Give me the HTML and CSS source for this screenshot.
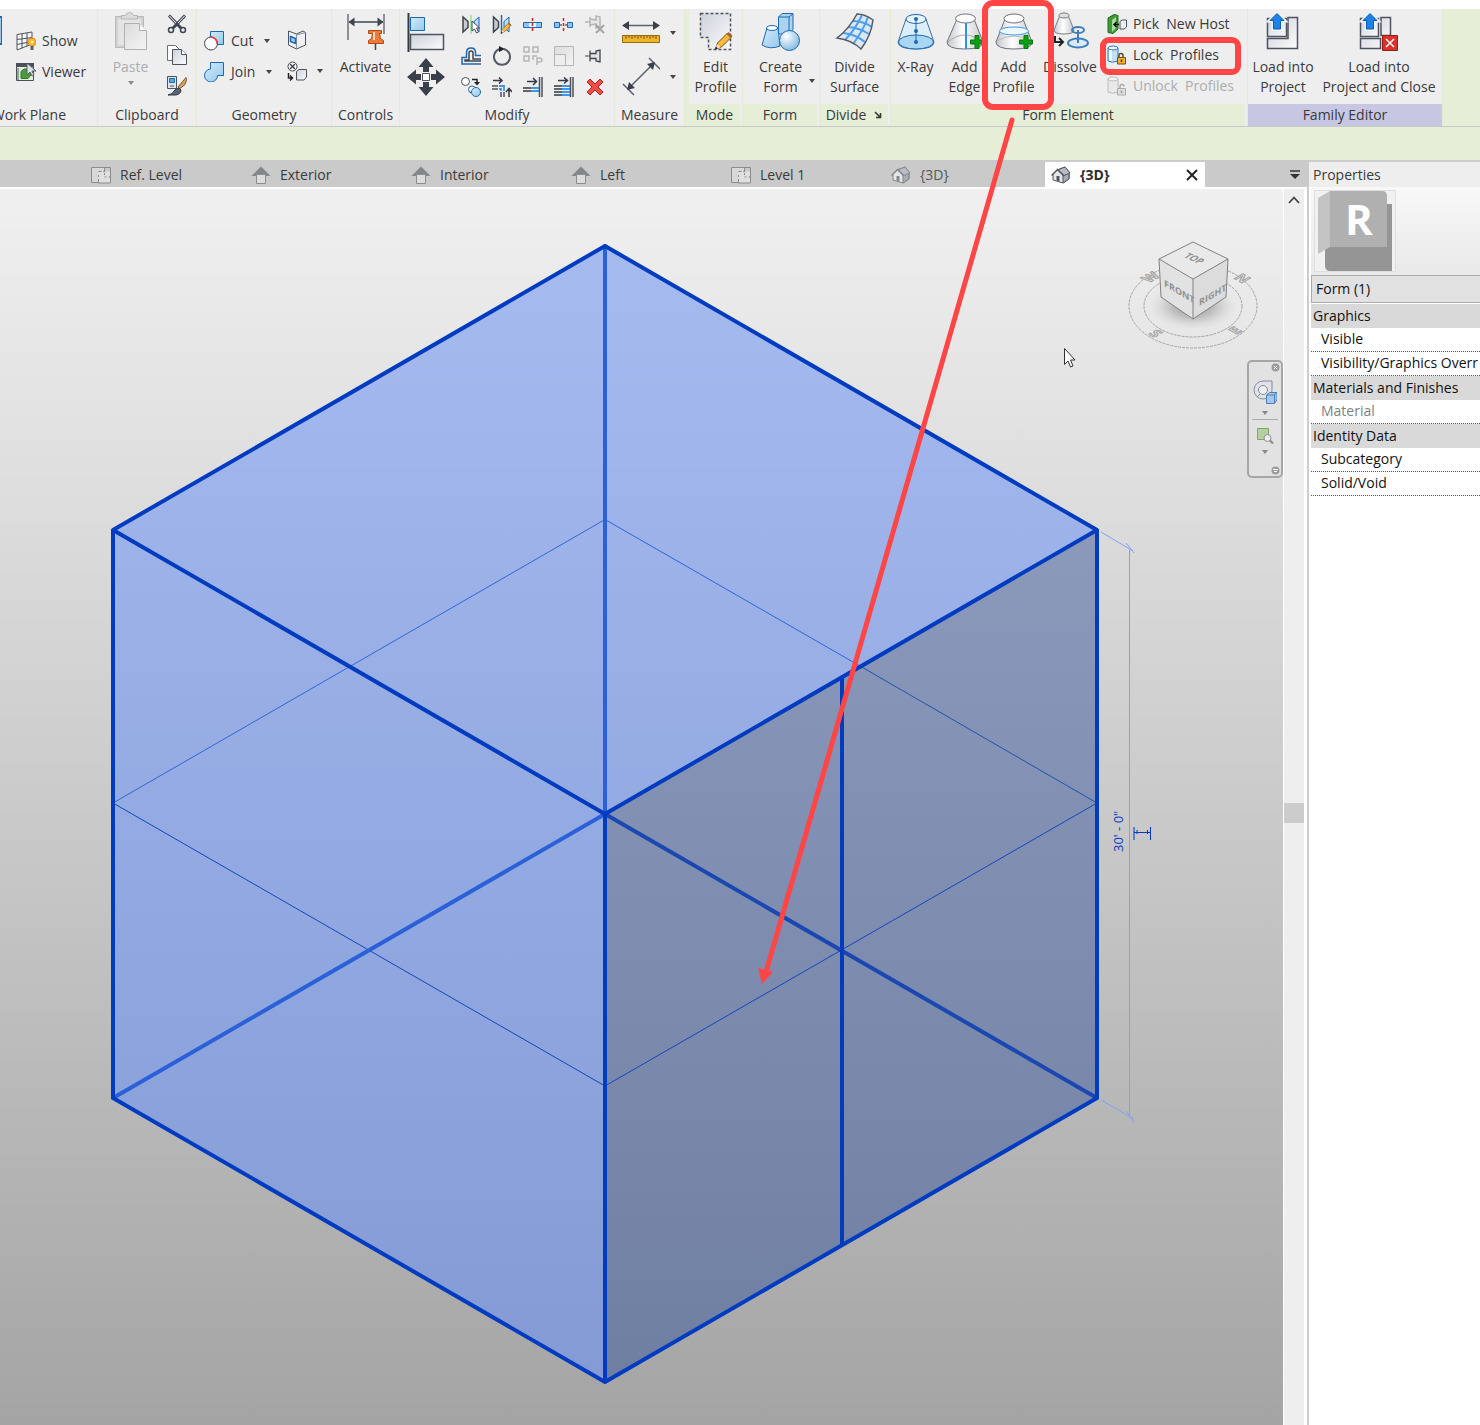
FILE: index.html
```html
<!DOCTYPE html>
<html lang="en">
<head>
<meta charset="utf-8">
<title>Form (1) - {3D}</title>
<link rel="stylesheet" href="styles.css">
</head>
<body>
<svg class="defs" width="0" height="0" aria-hidden="true">
  <defs>
    <linearGradient id="silver" x1="0" y1="0" x2="1" y2="1"><stop offset="0" stop-color="#cdd1da"/><stop offset="1" stop-color="#fbfbfc"/></linearGradient>
    <linearGradient id="grey" x1="0" y1="0" x2="1" y2="1"><stop offset="0" stop-color="#dcdcdc"/><stop offset="1" stop-color="#f4f4f4"/></linearGradient>
    <linearGradient id="sky" x1="0" y1="0" x2="1" y2="1"><stop offset="0" stop-color="#d3ebfa"/><stop offset="1" stop-color="#94c8ec"/></linearGradient>
    <linearGradient id="cone" x1="0" x2="1"><stop offset="0" stop-color="#c4c7cc"/><stop offset=".45" stop-color="#ffffff"/><stop offset="1" stop-color="#c4c7cc"/></linearGradient>
    <radialGradient id="ball" cx=".35" cy=".3" r=".75"><stop offset="0" stop-color="#fff"/><stop offset="1" stop-color="#7fb9e0"/></radialGradient>
    <linearGradient id="lightface" gradientUnits="userSpaceOnUse" x1="0" y1="246" x2="0" y2="1382"><stop offset="0" stop-color="#a5bbf0"/><stop offset="1" stop-color="#839ad4"/></linearGradient>
    <linearGradient id="darkface" gradientUnits="userSpaceOnUse" x1="0" y1="530" x2="0" y2="1382"><stop offset="0" stop-color="#8b99bb"/><stop offset="1" stop-color="#6f7fa2"/></linearGradient>
    <radialGradient id="shade"><stop offset="0" stop-color="#777" stop-opacity=".9"/><stop offset=".5" stop-color="#999" stop-opacity=".5"/><stop offset="1" stop-color="#ccc" stop-opacity="0"/></radialGradient>
    <symbol id="i-pencil" viewBox="0 0 20 20"><path d="M2 18 4 12 14 2l4 4L8 16Z" fill="#fdb93a" stroke="#6b4a1e"/><path d="m13 3 2-2 4 4-2 2Z" fill="#a5632b"/><path d="m2 18 1.500-5L7 16.500Z" fill="#fbe3c0"/><path d="m1.500 18.500 1-3 2 2Z" fill="#222"/></symbol>
    <symbol id="i-plus" viewBox="0 0 14 14"><path d="M5 .5h4V5h4.500v4H9v4.500H5V9H.5V5H5Z" fill="#0aa012" stroke="#087a0e"/></symbol>
    <symbol id="i-plan" viewBox="0 0 20 18"><path d="M.5 1.500h13v15H.5Z" fill="#d8d8d8" stroke="#888b8f"/><path d="M7.500 5.500H19.500v11.500H7.500Z" fill="#e0e0e0"/><path d="M13.500 5.500V1.500h6v15.500h-12V13m0-2V9m0-3.500h3m1.500 0h2M13.500 7v2m0 2h2m2 0h2" fill="none" stroke="#888b8f"/></symbol>
    <symbol id="i-elev" viewBox="0 0 20 18"><path d="M10 .5 19.500 10H.5Z" fill="#84868a"/><path d="M5.500 8.500h9v9h-9Z" fill="#dcdcdc" stroke="#8b8d91"/></symbol>
    <symbol id="i-house" viewBox="0 0 20 18"><path d="m2 8 4-4 8-3 4 5v7l-6 4-10-3Z" fill="#e3e5e8" stroke="currentColor"/><path d="M12 8 18 6.500v6.500l-6 4Z" fill="#a7acb3" stroke="currentColor"/><path d="M6.500 4 14 1l5 6-6 2.500Z" fill="#b9bdc3" stroke="currentColor"/><path d="M.5 9.500 6.500 3.500 13 10" fill="none" stroke="currentColor" stroke-width="1.500"/><path d="M5.500 10h3v5.500l-3-1Z" fill="currentColor"/></symbol>
  </defs>
</svg>

<div class="app">
  <header class="ribbon">
    <section class="panel work-plane">
      <div class="panel-body">
        <svg class="sliver" width="2" height="29" aria-hidden="true"><path d="M0 0h2v29H0Z" fill="#1d68b3"/><path d="M0 2h1v25H0Z" fill="#9cc8ec"/></svg>
        <div class="rows two">
          <button class="cmd"><svg width="20" height="20" viewBox="0 0 20 20"><path d="M1 3.500 16 1v12L1 19Z" fill="#f3f5f7" stroke="#4d535e"/><path d="M6 3v14.500M11 2v13.500M1 8.500l15-2M1 13.500l15-3" stroke="#4d535e"/><circle cx="16" cy="11" r="4" fill="#ffb52e" stroke="#f08a10"/><circle cx="16" cy="11" r="1.500" fill="#fff3b0"/><path d="M14.500 15h3v4h-3Z" fill="#555c68"/></svg>Show</button>
          <button class="cmd"><svg width="20" height="20" viewBox="0 0 20 20"><path d="M.5 1.500h17v17H.5Z" fill="#e6ebe6" stroke="#4a4f58"/><path d="M0 1h18v4H0Z" fill="#4a4f58"/><path d="M1 6h2v12H1Z" fill="#8a9"/><path d="M5 9.500 8 7h7v6l-3 3.500H5Z" fill="#4b9a3e" stroke="#2c7a25"/><path d="M11 1v12l3-3 2 4 2-1-2-4h4Z" fill="#dfe1e4" stroke="#555b66"/></svg>Viewer</button>
        </div>
      </div>
      <h2 class="panel-title">Work Plane</h2>
    </section>

    <section class="panel clipboard">
      <div class="panel-body">
        <button class="big" disabled><svg width="34" height="40" viewBox="0 0 34 40"><path d="M1.500 4.500h28v31h-28Z" fill="#d2d2d2" stroke="#b9b9b9"/><path d="M4 7h23v26H4Z" fill="#e4e4e4"/><path d="M7.500 7V3.500h4q1-3 4-3t4 3h4V7Z" fill="#dcdcdc" stroke="#b4b4b4"/><path d="M10.500 11.500h15l7 7v19h-22Z" fill="url(#grey)" stroke="#b0b0b0"/><path d="M25.500 11.500v7h7" fill="#fff" stroke="#b0b0b0"/></svg><span>Paste</span><i class="caret"></i></button>
        <div class="rows">
          <button class="cmd" aria-label="Cut to clipboard"><svg width="20" height="20" viewBox="0 0 20 20"><path d="M2 1.500 11 11l4 4M18 1.500 9 11l-4 4" fill="none" stroke="#3f4550" stroke-width="3"/><path d="M2.500 2 9 9M17.500 2 11 9" stroke="#fff"/><circle cx="4" cy="16" r="2.500" fill="#eee" stroke="#3f4550" stroke-width="1.500"/><circle cx="16" cy="16" r="2.500" fill="#eee" stroke="#3f4550" stroke-width="1.500"/></svg></button>
          <button class="cmd" aria-label="Copy to clipboard"><svg width="20" height="20" viewBox="0 0 20 20"><path d="M.5.5h8l4 4v11H.5Z" fill="#fff" stroke="#6a6f78"/><path d="M5.500 4.500h9l5 5v10h-14Z" fill="url(#silver)" stroke="#4d535e"/><path d="M14.500 4.500v5h5" fill="#fff" stroke="#4d535e"/></svg></button>
          <button class="cmd" aria-label="Match type"><svg width="20" height="20" viewBox="0 0 20 20"><path d="M.5.5h9v12h-9Z" fill="#dfe4ea" stroke="#4d535e"/><path d="M2.500 2.500h5v4h-5Z" fill="#5ba7e6" stroke="#1d68b3"/><path d="M3 10h4" stroke="#4d535e"/><path d="m11 11 8-9.500 1 1-2 6-5 4Z" fill="#d8a058" stroke="#7a5a30"/><path d="M1 19q5-1 6-4 2-3 5-3l2 2q0 4-5 5Z" fill="#5b6370" stroke="#333944"/></svg></button>
        </div>
      </div>
      <h2 class="panel-title">Clipboard</h2>
    </section>

    <section class="panel geometry">
      <div class="panel-body">
        <div class="rows two">
          <button class="cmd"><svg width="20" height="20" viewBox="0 0 20 20"><path d="M6.500.5h13v13h-13Z" fill="url(#sky)" stroke="#1d68b3"/><circle cx="7" cy="12.500" r="6.500" fill="#fff" stroke="#3f4550"/><path d="M6.500 6A6.500 6.500 0 0 1 13 13" fill="none" stroke="#f33" stroke-width="1.500"/></svg>Cut<i class="caret"></i></button>
          <button class="cmd"><svg width="20" height="20" viewBox="0 0 20 20"><path d="M6.500.5h13v13h-6A6.500 6.500 0 1 1 6.500 7Z" fill="url(#sky)" stroke="#1d68b3"/></svg>Join<i class="caret"></i></button>
        </div>
        <div class="rows two extra">
          <button class="cmd" aria-label="Split face"><svg width="20" height="20" viewBox="0 0 20 20"><path d="m1.500 1 8 3L16 1l2.500 1.500V15l-9 4-8-4Z" fill="#eef0f3" stroke="#4d535e"/><path d="m9.500 5 9-2.500M9.500 4v15" stroke="#8b919b"/><path d="m3.500 6.500 5 2v5l-5-2Z" fill="#9cd0f5" stroke="#1d68b3" stroke-width="1.500"/></svg></button>
          <button class="cmd" aria-label="Paint"><svg width="20" height="20" viewBox="0 0 20 20"><circle cx="5.500" cy="5.500" r="4.500" fill="#fff" stroke="#3f4550"/><path d="m3 3 5 5m0-5L3 8" stroke="#3f4550" stroke-width="1.500"/><path d="M9.500 10.500 12 8.500h7.500v7.500L17 19H9.500Z" fill="url(#silver)" stroke="#4d535e"/><path d="M1.500 12v5H5m-2-2.500L5.500 17 3 19.500" fill="none" stroke="#222" stroke-width="1.500"/></svg><i class="caret"></i></button>
        </div>
      </div>
      <h2 class="panel-title">Geometry</h2>
    </section>

    <section class="panel controls">
      <div class="panel-body">
        <button class="big"><svg width="38" height="40" viewBox="0 0 38 40"><path d="M1 2v26M37 2v20" stroke="#6c727c" stroke-width="1.500"/><path d="M2 10h34" stroke="#3f4550" stroke-width="1.500"/><path d="m1.500 10 6-4.500v9ZM36.500 10l-6-4.500v9Z" fill="#3f4550"/><path d="M21.500 18.500h13v3h-2l1 5 3 2v3h-15v-3l3-2 1-5h-4Z" fill="#ec7a3a" stroke="#b34a10"/><path d="M26 20h2v8h-2Z" fill="#ffd9bd"/><path d="M28.500 32v6" stroke="#444" stroke-width="1.500"/></svg><span>Activate</span></button>
      </div>
      <h2 class="panel-title">Controls</h2>
    </section>

    <section class="panel modify">
      <div class="panel-body">
        <div class="tall">
          <button aria-label="Align"><svg width="38" height="40" viewBox="0 0 38 40"><path d="M1.500 0v39" stroke="#333944" stroke-width="2"/><path d="M3.500 4.500h14v13h-14Z" fill="url(#sky)" stroke="#1d68b3"/><path d="M3.500 21.500h33v15h-33Z" fill="url(#silver)" stroke="#4d535e" stroke-width="1.500"/></svg></button>
          <button aria-label="Move"><svg width="38" height="40" viewBox="0 0 38 40"><path d="m19 1 7.500 9H22v5h-6v-5h-4.500ZM19 39l-7.500-9H16v-5h6v5h4.500ZM0 20l9-7.500V17h5v6H9v4.500ZM38 20l-9-7.500V17h-5v6h5v4.500Z" fill="#3a404a"/><path d="M15.500 16.500h7v7h-7Z" fill="#fff" stroke="#4d535e"/></svg></button>
        </div>
        <div class="tools">
          <button aria-label="Mirror - pick axis"><svg width="20" height="20" viewBox="0 0 20 20"><path d="M18 2v15l-5-4.500v-6Z" fill="#bcdcf4" stroke="#1d68b3"/><path d="M2 2v15l5-4.500v-6Z" fill="#c8cbd0" stroke="#3f4550" stroke-width="1.500"/><path d="M10 0v19" stroke="#6d6"/><path d="M11 6v10l2.500-2 2 4 2-1-2-4h3Z" fill="#fff" stroke="#3f4550"/></svg></button>
          <button aria-label="Mirror - draw axis"><svg width="20" height="20" viewBox="0 0 20 20"><path d="M1.500 2v15l5-4.500v-6Z" fill="#c8cbd0" stroke="#3f4550" stroke-width="1.500"/><path d="M17 2v15l-5-4.500v-6Z" fill="#bcdcf4" stroke="#1d68b3"/><path d="M9.500 0v19" stroke="#1d68b3" stroke-width="1.500"/><use href="#i-pencil" x="8" y="7" width="12" height="12"/></svg></button>
          <button aria-label="Split element"><svg width="20" height="20" viewBox="0 0 20 20"><path d="M.5 7.500h18v5H.5Z" fill="#8cc4ec" stroke="#1d68b3"/><path d="M6 8h7v4H6Z" fill="#e6f3fc"/><path d="M9.500 3v13" stroke="#e02020" stroke-dasharray="3 2" stroke-width="1.500"/></svg></button>
          <button aria-label="Split with gap"><svg width="20" height="20" viewBox="0 0 20 20"><path d="M.5 7.500h5v5h-5ZM13.500 7.500h5v5h-5Z" fill="#8cc4ec" stroke="#1d68b3"/><path d="M9.500 3v13" stroke="#e02020" stroke-dasharray="3 2" stroke-width="1.500"/><path d="M6 10h2m3 0h2" stroke="#222"/></svg></button>
          <button aria-label="Unpin" disabled><svg width="20" height="20" viewBox="0 0 20 20"><path d="M0 7h5m0-5v10M5 4l6 1V1l4 1v10l-4 1V9l-6 1" fill="#e6e6e6" stroke="#b5b5b5" stroke-width="1.500"/><path d="m11 10 8 8m0-8-8 8" stroke="#a5a5a5" stroke-width="2"/></svg></button>
          <button aria-label="Offset"><svg width="20" height="20" viewBox="0 0 20 20"><path d="M20 9.500h-5.500v-3q0-4.500-4.500-4.500T5.500 6.500v5H1V18h19" fill="none" stroke="#1d68b3" stroke-width="1.500"/><path d="M20 13h-8V7q0-2-2-2T8 7v7H4v1h16" fill="none" stroke="#3f4550" stroke-width="1.500"/></svg></button>
          <button aria-label="Rotate"><svg width="20" height="20" viewBox="0 0 20 20"><path d="M12 3a8 8 0 1 1-4 0" fill="none" stroke="#555b66" stroke-width="2"/><path d="M7 0v6l6-3Z" fill="#222"/></svg></button>
          <button aria-label="Array" disabled><svg width="20" height="20" viewBox="0 0 20 20"><path d="M1 1h5v5H1ZM10 1h5v5h-5ZM1 10h5v5H1ZM10 14v-4h4" fill="none" stroke="#b5b5b5" stroke-width="1.500"/><path d="M14 19v-7h2q3 0 3 2t-3 2h-2" fill="none" stroke="#b5b5b5" stroke-width="1.500"/></svg></button>
          <button aria-label="Scale" disabled><svg width="20" height="20" viewBox="0 0 20 20"><path d="M.5.5h19v19H.5Z" fill="url(#grey)" stroke="#b5b5b5"/><path d="M.5 8.500h11v11H.5Z" fill="#eee" stroke="#b5b5b5"/></svg></button>
          <button aria-label="Pin"><svg width="20" height="20" viewBox="0 0 20 20"><path d="M0 10h5" stroke="#3f4550"/><path d="M5 4.500v11M5 7.500h6V5l4-1v12l-4-1v-2.500H5" fill="#dfe1e4" stroke="#3f4550" stroke-width="1.300"/></svg></button>
          <button aria-label="Copy"><svg width="20" height="20" viewBox="0 0 20 20"><circle cx="4.500" cy="4.500" r="4" fill="#fff" stroke="#4d535e"/><circle cx="11" cy="12.500" r="3.500" fill="#fff" stroke="#1d68b3"/><circle cx="15" cy="15" r="4.500" fill="url(#sky)" stroke="#1d68b3"/><path d="M11 2.500h5v3" fill="none" stroke="#222" stroke-width="1.500"/><path d="M13 5h6l-3 3.500Z" fill="#222"/></svg></button>
          <button aria-label="Trim/extend to corner"><svg width="20" height="20" viewBox="0 0 20 20"><path d="M1 3.500h9m-3-3 3 3-3 3M17 20v-8m-3 3 3-3.500 3 3.500" fill="none" stroke="#333944" stroke-width="1.500"/><path d="M0 9h6M0 12h6M9 15v5m3-5v5" stroke="#4d535e" stroke-width="1.500"/><path d="M7 9h5v5M7 12h2v2" fill="none" stroke="#3c96ee" stroke-width="1.800"/></svg></button>
          <button aria-label="Trim/extend single"><svg width="20" height="20" viewBox="0 0 20 20"><path d="M4 4.500h9m-3-3.500 3.500 3.500L10 8M0 11h8M0 14h8" fill="none" stroke="#333944" stroke-width="1.500"/><path d="M8 11h8M8 14h8" stroke="#3c96ee" stroke-width="2"/><path d="M16.500 0v20m2.500-20v20" stroke="#4d535e" stroke-width="1.500"/></svg></button>
          <button aria-label="Trim/extend multiple"><svg width="20" height="20" viewBox="0 0 20 20"><path d="M4 3.500h9M10 .5l3.500 3L10 6.500M0 9h8M0 12h8M0 15h8M0 18h8" fill="none" stroke="#333944" stroke-width="1.500"/><path d="M8 9h8M8 12h8M8 15h8M8 18h8" stroke="#3c96ee" stroke-width="2"/><path d="M16.500 0v20m2.500-20v20" stroke="#4d535e" stroke-width="1.500"/></svg></button>
          <button aria-label="Delete"><svg width="20" height="20" viewBox="0 0 20 20"><path d="m2 5 3-3 5 5 5-5 3 3-5 5 5 5-3 3-5-5-5 5-3-3 5-5Z" fill="#ee4e48" stroke="#b51e1a"/></svg></button>
        </div>
      </div>
      <h2 class="panel-title">Modify</h2>
    </section>

    <section class="panel measure">
      <div class="panel-body">
        <div class="tall">
          <button aria-label="Measure"><svg width="38" height="40" viewBox="0 0 38 40"><path d="M3 12.500h32" stroke="#5a606a" stroke-width="1.500"/><path d="m0 12.500 7-4.500v9ZM38 12.500 31 8v9Z" fill="#3a404a"/><path d="M.5 22.500h37v7H.5Z" fill="#efb62c" stroke="#946a0c"/><path d="M4 23v3m3-3v2m3-2v3m3-3v2m3-2v3m3-3v2m3-2v3m3-3v2m3-2v3m3-3v2m3-2v3" stroke="#7a560a"/></svg><i class="caret"></i></button>
          <button aria-label="Aligned dimension"><svg width="38" height="40" viewBox="0 0 38 40"><path d="m7 31 24-24M1 27l11 11M27 1l11 11" stroke="#5a606a" stroke-width="1.500"/><path d="m5 33 2-8 6 6ZM33 5l-8 2 6 6Z" fill="#3a404a"/></svg><i class="caret"></i></button>
        </div>
      </div>
      <h2 class="panel-title">Measure</h2>
    </section>

    <section class="panel contextual mode">
      <div class="panel-body">
        <button class="big"><svg width="34" height="40" viewBox="0 0 34 40"><path d="M1.500 1.500h30v36h-22v-12h-8Z" fill="url(#silver)" stroke="#4d535e" stroke-width="1.500" stroke-dasharray="3 2"/><use href="#i-pencil" x="14" y="19" width="21" height="20"/></svg><span>Edit<br>Profile</span></button>
      </div>
      <h2 class="panel-title">Mode</h2>
    </section>

    <section class="panel contextual form">
      <div class="panel-body">
        <button class="big"><svg width="40" height="40" viewBox="0 0 40 40"><path d="M17.500 5 21 1.500h11v16L28 22H17.500Z" fill="#a9d3ee" stroke="#1d68b3"/><path d="M17.500 5H28l4-3.500M28 5v16" fill="none" stroke="#1d68b3"/><path d="m6 16-5 17q8 5 18 1l-2-18Z" fill="url(#sky)" stroke="#1d68b3"/><ellipse cx="11" cy="16" rx="5.500" ry="2.500" fill="#fff" stroke="#1d68b3"/><circle cx="28.500" cy="28.500" r="10" fill="url(#ball)" stroke="#1d68b3"/></svg><span>Create<br>Form</span></button><i class="caret low"></i>
      </div>
      <h2 class="panel-title">Form</h2>
    </section>

    <section class="panel contextual divide">
      <div class="panel-body">
        <button class="big"><svg width="40" height="40" viewBox="0 0 40 40"><path d="M2 26Q14 17 22 2q8 0 16 6-2 16-12 29-9-9-24-11Z" fill="#dce7f2"/><path d="M10 28Q20 18 27 3M18 32Q28 19 33 5M8 21q12 1 22 9M13 15q12 1 21 7M18 9q10 0 19 6" fill="none" stroke="#4aa0ee" stroke-width="2"/><path d="M2 26Q14 17 22 2q8 0 16 6-2 16-12 29-9-9-24-11Z" fill="none" stroke="#555b66" stroke-width="1.500"/></svg><span>Divide<br>Surface</span></button>
      </div>
      <h2 class="panel-title">Divide <svg width="8" height="8" viewBox="0 0 8 8" aria-hidden="true"><path d="m1 1 5 5M6.500 2v4.500H2" fill="none" stroke="#333" stroke-width="1.500"/></svg></h2>
    </section>

    <section class="panel contextual form-element">
      <div class="panel-body">
        <button class="big"><svg width="40" height="40" viewBox="0 0 40 40"><path d="M10 7 2 30q0 7 18 7t18-7L30 7Z" fill="#dceefa" stroke="#3f6f9c"/><ellipse cx="20" cy="30" rx="17.500" ry="7" fill="#a9d6f2" stroke="#1d68b3"/><ellipse cx="20" cy="7" rx="10" ry="4.500" fill="#eaf6fd" stroke="#1d68b3"/><path d="M20 7v23" stroke="#1d68b3"/><circle cx="20" cy="7" r="2" fill="#1d68b3"/><circle cx="20" cy="19" r="2" fill="#1d68b3"/><circle cx="20" cy="30" r="2" fill="#1d68b3"/></svg><span>X-Ray</span></button>
        <button class="big"><svg width="40" height="40" viewBox="0 0 40 40"><path d="M12 7 2 30q0 7 18 7t18-7L29 7Z" fill="url(#cone)" stroke="#6b717b"/><path d="M3 30q8-7 17-7t17 7" fill="none" stroke="#aaa"/><ellipse cx="20.500" cy="6.500" rx="10" ry="4.500" fill="#fff" stroke="#6b717b"/><path d="M21 11v26" stroke="#2f90ee" stroke-width="2"/><use href="#i-plus" x="25" y="23" width="14" height="14"/></svg><span>Add<br>Edge</span></button>
        <button class="big"><svg width="40" height="40" viewBox="0 0 40 40"><path d="M11 7 2 30q0 7 18 7t18-7L29 7Z" fill="url(#cone)" stroke="#6b717b"/><path d="M3 29q8-5 17-5t17 5" fill="none" stroke="#bbb"/><ellipse cx="20" cy="6.500" rx="10" ry="4.500" fill="#fff" stroke="#6b717b"/><ellipse cx="20" cy="19" rx="14.500" ry="4" fill="#eef7fd" stroke="#3c96ee"/><use href="#i-plus" x="25" y="23" width="14" height="14"/></svg><span>Add<br>Profile</span></button>
        <button class="big dissolve"><svg width="40" height="40" viewBox="0 0 40 40"><path d="M10 3 4 18q0 4 10 4t10-4L18 3Z" fill="url(#cone)" stroke="#777c85"/><ellipse cx="14" cy="3.500" rx="5" ry="2.500" fill="#ddd" stroke="#777c85"/><g fill="none" stroke="#3f7fb8" stroke-width="2"><ellipse cx="28" cy="31" rx="10" ry="4.500" fill="#dceaf5"/><ellipse cx="28" cy="18" rx="6" ry="3"/><path d="M28 18v13"/></g><path d="M5 24v6h7M9 26l4 4-4 4" fill="none" stroke="#222" stroke-width="2"/></svg><span>Dissolve</span></button>
        <div class="rows">
          <button class="cmd"><svg width="20" height="20" viewBox="0 0 20 20"><path d="m1 4 6-3.500 4 1V15l-5 4.500-5-1Z" fill="#3f9a35" stroke="#1f6e1c"/><path d="m5 6 4-3v11l-4 4Z" fill="#a8dba0"/><path d="M13 7.500 15 6h4.500v7L17 15h-4Z" fill="#eef0f3" stroke="#4d535e"/><path d="M12 10.500H7m2.500-2.500L7 10.500 9.500 13" fill="none" stroke="#111" stroke-width="1.500"/></svg>Pick  New Host</button>
          <button class="cmd"><svg width="20" height="20" viewBox="0 0 20 20"><path d="M1 3v13q4 2.500 10 0V3Z" fill="#bfe0f5" stroke="#2f7ab8"/><ellipse cx="6" cy="3" rx="5" ry="2" fill="#eaf6fd" stroke="#2f7ab8"/><path d="M2 5h3v11H2Z" fill="#fff" opacity=".8"/><path d="M12 13v-2.500q0-2 2-2t2 2V13" fill="none" stroke="#5b4a28" stroke-width="1.500"/><path d="M10.500 12.500h8v6.500h-8Z" fill="#f3b233" stroke="#7a4c10"/><path d="M14.500 14.500v2.500" stroke="#5a2c05" stroke-width="1.500"/></svg>Lock  Profiles</button>
          <button class="cmd" disabled><svg width="20" height="20" viewBox="0 0 20 20"><path d="M1 3v13q4 2.500 10 0V3Z" fill="#e9e9e9" stroke="#bbb"/><ellipse cx="6" cy="3" rx="5" ry="2" fill="#f4f4f4" stroke="#bbb"/><path d="M13 13v-2.500q0-2 2-2t2 2" fill="none" stroke="#aaa" stroke-width="1.500"/><path d="M10.500 12.500h8v6.500h-8Z" fill="#ddd" stroke="#aaa"/><path d="M14.500 14.500v2.500" stroke="#999" stroke-width="1.500"/></svg>Unlock  Profiles</button>
        </div>
      </div>
      <h2 class="panel-title">Form Element</h2>
    </section>

    <section class="panel family">
      <div class="panel-body">
        <button class="big load"><svg width="34" height="40" viewBox="0 0 34 40"><path d="M1.500 6.500h19v18h-19Z" fill="url(#silver)" stroke="#4d535e" stroke-width="1.500"/><path d="M22 5.500h9.500v31h-30V26.500H22Z" fill="url(#silver)" stroke="#4d535e" stroke-width="1.500"/><path d="m11 1.500 7 7h-3.500V17h-7V8.500H4Z" fill="#1d82e8" stroke="#eef4fb" stroke-width="4"/><path d="m11 1.500 7 7h-3.500V17h-7V8.500H4Z" fill="#1d82e8" stroke="#0d5cae"/></svg><span>Load into<br>Project</span></button>
        <button class="big load-close"><svg width="40" height="40" viewBox="0 0 40 40"><path d="M1.500 6.500h18v18h-18Z" fill="url(#silver)" stroke="#4d535e" stroke-width="1.500"/><path d="M22 5.500h9.500v18H22ZM1.500 26.500h20v10h-20Z" fill="url(#silver)" stroke="#4d535e" stroke-width="1.500"/><path d="m11 1.500 7 7h-3.500V17h-7V8.500H4Z" fill="#1d82e8" stroke="#eef4fb" stroke-width="4"/><path d="m11 1.500 7 7h-3.500V17h-7V8.500H4Z" fill="#1d82e8" stroke="#0d5cae"/><path d="M23.500 23.500h15v15h-15Z" fill="#d8322c" stroke="#9c1a16"/><path d="m27 27 8 8m0-8-8 8" stroke="#fff" stroke-width="1.500"/></svg><span>Load into<br>Project and Close</span></button>
      </div>
      <h2 class="panel-title">Family Editor</h2>
    </section>
  </header>
  <div class="options-bar"></div>

  <div class="workspace">
    <main class="views">
      <nav class="tabs" aria-label="Open views">
        <div class="tab"><button><svg width="20" height="18"><use href="#i-plan"/></svg>Ref. Level</button></div>
        <div class="tab"><button><svg width="20" height="18"><use href="#i-elev"/></svg>Exterior</button></div>
        <div class="tab"><button><svg width="20" height="18"><use href="#i-elev"/></svg>Interior</button></div>
        <div class="tab"><button><svg width="20" height="18"><use href="#i-elev"/></svg>Left</button></div>
        <div class="tab"><button><svg width="20" height="18"><use href="#i-plan"/></svg>Level 1</button></div>
        <div class="tab faded"><button><svg width="20" height="18"><use href="#i-house"/></svg>{3D}</button></div>
        <div class="tab active"><button><svg width="20" height="18"><use href="#i-house"/></svg>{3D}</button><button class="close" aria-label="Close view"><svg width="12" height="12" viewBox="0 0 12 12"><path d="m1 1 10 10m0-10L1 11" stroke="#222" stroke-width="2"/></svg></button></div>
        <button class="tab-list" aria-label="List views"><svg width="12" height="10" viewBox="0 0 12 10"><path d="M1 1h10" stroke="#333" stroke-width="1.500"/><path d="M1 4h10L6 9Z" fill="#333"/></svg></button>
      </nav>
      <div class="stage">
        <div class="canvas">
          <svg class="model" role="img" aria-label="3D view of a cube form">
            <g transform="translate(0 -189)">
              <path d="M605 246 1097 530 605 814V1382L113 1098V530Z" fill="url(#lightface)"/>
              <path d="M1097 530V1098L605 1382V814Z" fill="url(#darkface)"/>
              <g fill="none" stroke-width="1">
                <path d="M113 803 605 519.500 860 666" stroke="#3264dc"/>
                <path d="M860 666 1097 803" stroke="#2350b4"/>
                <path d="M113 803 605 1086 1097 803" stroke="#1446be"/>
              </g>
              <g fill="none" stroke-width="4" stroke-linejoin="round" stroke-linecap="round">
                <path d="M605 246V814L113 1098" stroke="#2a61d8"/>
                <path d="M605 814 1097 1098" stroke="#1a48b0"/>
                <path d="M605 246 1097 530V1098L605 1382 113 1098V530ZM113 530 605 814 1097 530M605 814V1382M842 677V1244" stroke="#003bc0"/>
              </g>
              <g fill="none" stroke="#7ea2f8">
                <path d="M1101 532 1133 551M1126 543l8 10M1101 1100l33 19M1126 1111l8 11"/>
                <path d="M1129.500 550V1116"/>
              </g>
              <path d="M1134 827v13M1150.500 827v13M1134 832.500h16M1137 830v4M1147.500 830v4" stroke="#003bc0" fill="none"/>
              <text class="dimension" transform="translate(1123 852) rotate(-90)">30' - 0"</text>
              <path d="M1064.500 348.500v16l3.500-3.500 2.500 6 2.500-1-2.500-6h4.500Z" fill="#fff" stroke="#333"/>
            </g>
          </svg>
          <svg class="viewcube" width="134" height="112" viewBox="0 0 134 112" role="img" aria-label="View cube">
            <g fill="none" stroke="#a3a3a3" stroke-dasharray="3 1"><ellipse cx="67" cy="66" rx="64" ry="42"/><ellipse cx="67" cy="66" rx="49" ry="31"/></g>
            <ellipse cx="67" cy="66" rx="44" ry="24" fill="url(#shade)"/>
            <g class="compass"><text transform="matrix(.87 .5 -.87 .5 22 94)">S</text><text transform="matrix(.87 -.5 .87 .5 110 95)">E</text><text transform="matrix(.87 -.5 .87 .5 23 43)">W</text><text transform="matrix(.87 .5 -.87 .5 107 38)">N</text></g>
            <path d="M67 2 102 19 100 57 67 79 35 57 33 19Z" fill="#e9e9e9"/>
            <path d="m33 19 34 20v40L35 57Z" fill="#e2e2e2"/><path d="m102 19-35 20v40l33-22Z" fill="#dcdcdc"/>
            <path d="M33 19 67 2l35 17-35 20ZM33 19l2 38 32 22 33-22 2-38M67 39v40" fill="none" stroke="#808080"/>
            <g class="faces"><text transform="translate(38 46) skewY(30)">FRONT</text><text transform="translate(73 66) skewY(-30)">RIGHT</text><text transform="translate(57 17) rotate(24) skewX(-30)">TOP</text></g>
          </svg>
          <div class="navbar">
            <button class="round" aria-label="Close navigation bar"><svg width="9" height="9" viewBox="0 0 9 9"><circle cx="4.500" cy="4.500" r="4" fill="#9c9c9c"/><path d="m3 3 3 3m0-3L3 6" stroke="#fff"/></svg></button>
            <button aria-label="Steering wheel"><svg width="24" height="26" viewBox="0 0 24 26"><path d="M10 1h9v9q0 9-9 9a9 9 0 0 1 0-18Z" fill="#dfe2e8" stroke="#858b94"/><circle cx="10" cy="10" r="4.500" fill="#eee" stroke="#858b94"/><path d="m4 17 3-3" stroke="#858b94"/><path d="m13.500 15 3-2.500H24V20l-2.500 3.500h-8Z" fill="#a5c8ea" stroke="#4d7fb2"/><path d="M13.500 15h8l2-2.500M21.500 15v8" fill="none" stroke="#4d7fb2"/></svg></button>
            <i class="caret"></i>
            <hr>
            <button aria-label="Zoom region"><svg width="18" height="18" viewBox="0 0 18 18"><path d="M1.500 1.500h11v11h-11Z" fill="#b5cfa3" stroke="#7ea56a"/><circle cx="11.500" cy="11" r="3.500" fill="#eee" stroke="#8b8f96"/><path d="m14 13.500 3 3" stroke="#858b94" stroke-width="2"/></svg></button>
            <i class="caret"></i>
            <button class="round end" aria-label="Customize"><svg width="9" height="9" viewBox="0 0 9 9"><circle cx="4.500" cy="4.500" r="4" fill="#9c9c9c"/><path d="M2 3.500h5M3 5.500h3" stroke="#fff"/></svg></button>
          </div>
        </div>
        <div class="scrollbar">
          <button aria-label="Scroll up"><svg width="12" height="8" viewBox="0 0 12 8"><path d="m1 7 5-5.500L11 7" fill="none" stroke="#444" stroke-width="1.800"/></svg></button>
          <div class="track"><div class="thumb"></div></div>
        </div>
      </div>
    </main>

    <aside class="properties">
      <h2 class="properties-title">Properties</h2>
      <div class="type-preview">
        <svg width="82" height="82" viewBox="0 0 82 82" role="img" aria-label="R">
          <path d="M.5.500h81v81H.5Z" fill="#f1f1f1" stroke="#dedede"/>
          <path d="M11 14h67v67H16q-5 0-5-6Z" fill="#959595"/>
          <path d="M4 8 16 1v56L4 64Z" fill="#c3c3c3"/>
          <path d="M16 1h52q5 0 5 5v51H16Z" fill="#b0b0b0"/>
          <text x="31" y="45" class="logo">R</text>
        </svg>
      </div>
      <select class="filter" aria-label="Selection filter"><option>Form (1)</option></select>
      <table class="grid">
        <tbody>
          <tr class="group"><th>Graphics</th></tr>
          <tr><td>Visible</td></tr>
          <tr><td>Visibility/Graphics Overr</td></tr>
          <tr class="group"><th>Materials and Finishes</th></tr>
          <tr class="muted"><td>Material</td></tr>
          <tr class="group"><th>Identity Data</th></tr>
          <tr><td>Subcategory</td></tr>
          <tr><td>Solid/Void</td></tr>
        </tbody>
      </table>
    </aside>
  </div>

  <svg class="markup" width="1260" height="1000" aria-hidden="true">
    <g fill="none" stroke="#ff4545" stroke-width="6"><rect x="985" y="3" width="66" height="104" rx="8"/><rect x="1103" y="40" width="135" height="32" rx="6"/></g>
    <path d="M1012 120 766 972" stroke="#ff4545" stroke-width="5" stroke-linecap="round"/>
    <path d="m758 968 15 4-11 12Z" fill="#ff4545"/>
  </svg>
</div>
</body>
</html>
```
FILE: styles.css
```css
* { box-sizing: border-box; }
body { margin: 0; background: #fff; color: #3a3a3a; font: 14px/20px "Open Sans", "Noto Sans", sans-serif; }
svg { display: block; flex: none; }
.defs { position: absolute; }
button { display: flex; align-items: center; padding: 0; border: 0; background: none; color: inherit; font: inherit; white-space: pre; }
button:disabled { color: #adadad; }
h2 { margin: 0; font-size: 14px; font-weight: 400; }

.app { position: relative; display: flex; flex-direction: column; min-height: 100vh; padding-top: 9px; overflow: hidden; }

/* Ribbon */
.ribbon { display: flex; height: 118px; background: #e5efd7; border-bottom: 1px solid #c6c8c4; }
.panel { flex: none; display: flex; flex-direction: column; background: #eee; border-right: 1px solid #e3ead8; }
.panel-body { display: flex; height: 95px; }
.panel-title { display: flex; align-items: center; justify-content: center; height: 22px; line-height: 22px; white-space: nowrap; }
.contextual .panel-title { margin-right: 2px; background: #e5efd7; }

.big { flex-direction: column; justify-content: flex-start; width: 49px; padding-top: 3px; text-align: center; }
.big svg { height: 40px; margin-bottom: 5px; }
.rows { display: flex; flex-direction: column; margin-top: -1px; }
.rows.two { padding-top: 17px; }
.cmd { height: 31px; gap: 6px; }
.caret { width: 0; height: 0; border: 3px solid transparent; border-top: 4px solid #444; border-bottom: 0; }
button:disabled .caret { border-top-color: #8a8a8a; margin-top: 4px; }

.work-plane { width: 98px; }
.work-plane .panel-title { justify-content: flex-end; padding-right: 31px; }
.work-plane .rows { padding-left: 14px; }
.sliver { margin-top: 7px; }
.clipboard { width: 99px; }
.clipboard .panel-body { padding-left: 8px; gap: 12px; }
.geometry { width: 135px; }
.geometry .panel-body { padding-left: 7px; gap: 15px; }
.geometry .cmd { gap: 7px; }
.geometry .cmd .caret { margin-left: 4px; }
.geometry .extra { padding-top: 16px; }
.geometry .extra .cmd .caret { margin-left: 3px; }
.controls { width: 68px; }
.controls .big { width: 67px; }
.modify { width: 215px; }
.modify .panel-body { padding-left: 7px; gap: 10px; }
.tall { display: flex; flex-direction: column; gap: 4px; padding-top: 4px; }
.tall button { height: 40px; gap: 10px; }
.tools { display: grid; grid-template-columns: repeat(5, 31px); grid-auto-rows: 31px; }
.tools button { justify-content: center; }
.measure { width: 70px; }
.measure .panel-body { padding-left: 7px; }
.mode { width: 58px; border-left: 4px solid #e5efd7; }
.mode .big { width: 54px; }
.form { width: 77px; }
.form .big { width: 66px; padding-left: 9px; }
.form .low { margin-top: 70px; }
.divide { width: 71px; }
.divide .big { width: 69px; }
.divide .panel-title { gap: 8px; }
.form-element { width: 357px; }
.form-element .dissolve { width: 64px; }
.form-element .rows { padding-left: 5px; }
.family { width: 195px; }
.family .load { width: 70px; }
.family .load-close { width: 122px; }
.family .panel-title { background: #c7c7e3; }
.options-bar { height: 33px; background: #e5efd7; }

/* Views */
.workspace { flex: 1; display: flex; min-height: 600px; background: #ccc; }
.views { flex: 1; min-width: 0; display: flex; flex-direction: column; }
.tabs { display: flex; height: 27px; padding: 2px 0 0 85px; background: #cacaca; }
.tab { display: flex; width: 160px; padding-left: 6px; }
.tab button { gap: 9px; }
.tab.faded { color: #55585c; }
.tab.faded svg { color: #83868a; }
.tab.active { justify-content: space-between; padding-right: 7px; background: #fff; font-weight: 700; color: #2e2e2e; }
.tab.active svg { color: #50555e; }
.tab-list { margin: 0 8px 0 auto; }
.stage { flex: 1; display: flex; margin-right: 2px; padding-top: 2px; background: #fff; }
.canvas { position: relative; flex: 1; min-width: 0; overflow: hidden; background: linear-gradient(#f0f0f0, #a4a4a4); }
.model { position: absolute; inset: 0; width: 100%; height: 100%; }
.dimension { fill: #003bc0; font-size: 13px; }
.viewcube { position: absolute; top: 51px; right: 23px; }
.faces { fill: #909090; font: 700 9px "Open Sans", sans-serif; }
.compass { fill: #e2e2e2; stroke: #a0a0a0; font: 700 14px "Open Sans", sans-serif; }
.navbar { position: absolute; top: 171px; right: 0; display: flex; flex-direction: column; align-items: center; width: 36px; height: 118px; border: 2px solid #a6a6a6; border-radius: 5px; background: #e2e2e2; }
.navbar .round { align-self: flex-end; margin: 1px 1px 8px 0; }
.navbar .end { margin: auto 1px 1px 0; }
.navbar .caret { margin: 5px 0 4px; border-top-color: #888; }
.navbar hr { width: 26px; margin: 0 0 7px; border: 0; border-top: 1px solid #aaa; }
.scrollbar { display: flex; flex-direction: column; width: 20px; margin: 0 3px 0 1px; background: #eee; }
.scrollbar button { justify-content: center; height: 22px; }
.track { flex: 1; display: flex; flex-direction: column; }
.track::before { content: ""; flex: 592; }
.track::after { content: ""; flex: 602; }
.thumb { height: 20px; background: #ccc; }

/* Properties */
.properties { flex: none; width: 171px; margin-top: 2px; padding-left: 2px; overflow: hidden; background: #fff; color: #111; }
.properties-title { height: 25px; margin-left: -2px; padding-left: 4px; line-height: 25px; background: #eee; color: #3a3a3a; }
.type-preview { height: 88px; padding: 3px; background: linear-gradient(#f8f8f8, #e9e9e9); }
.filter { appearance: none; display: block; width: 176px; height: 28px; padding: 0 4px; border: 1px solid #aaa; border-radius: 0; background: #e1e1e1; color: #111; font: inherit; }
.grid { width: 100%; margin-top: 1px; border-spacing: 0; white-space: nowrap; }
.grid th { height: 24px; padding: 0 2px; background: #d9d9d9; font-weight: 400; text-align: left; }
.grid td { height: 24px; padding: 0 10px 2px; border-bottom: 1px dotted #555; line-height: 20px; }
.grid .muted { color: #808080; }
.logo { fill: #fff; font: 700 42px "Open Sans", sans-serif; }

.markup { position: absolute; top: 0; left: 0; pointer-events: none; }
```
